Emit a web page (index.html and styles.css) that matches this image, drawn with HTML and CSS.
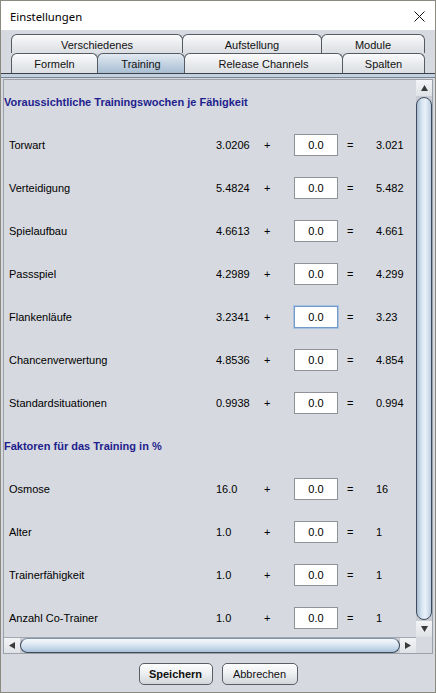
FILE: index.html
```html
<!DOCTYPE html>
<html lang="de">
<head>
<meta charset="utf-8">
<title>Einstellungen</title>
<link rel="stylesheet" href="styles.css">
</head>
<body>
<div class="window">
  <div class="titlebar">
    <span class="title">Einstellungen</span>
    <svg class="close" width="11" height="11" viewBox="0 0 11 11"><path d="M0.5 0.5L10.5 10.5M10.5 0.5L0.5 10.5" stroke="#111" stroke-width="1" fill="none"/></svg>
  </div>
  <div class="tabs">
    <div class="tabrow back">
      <div class="tab w-versch">Verschiedenes</div>
      <div class="tab w-aufst">Aufstellung</div>
      <div class="tab w-module">Module</div>
    </div>
    <div class="tabrow front">
      <div class="tab w-formeln">Formeln</div>
      <div class="tab w-training selected">Training</div>
      <div class="tab w-release">Release Channels</div>
      <div class="tab w-spalten">Spalten</div>
    </div>
  </div>
  <div class="tabline"></div>
  <div class="pane">
    <div class="pane-main">
      <div class="viewport">
        <div class="heading">Voraussichtliche Trainingswochen je Fähigkeit</div>
        <div class="row"><span class="label">Torwart</span><span>3.0206</span><span>+</span><span class="field">0.0</span><span class="eq">=</span><span>3.021</span></div>
        <div class="row"><span class="label">Verteidigung</span><span>5.4824</span><span>+</span><span class="field">0.0</span><span class="eq">=</span><span>5.482</span></div>
        <div class="row"><span class="label">Spielaufbau</span><span>4.6613</span><span>+</span><span class="field">0.0</span><span class="eq">=</span><span>4.661</span></div>
        <div class="row"><span class="label">Passspiel</span><span>4.2989</span><span>+</span><span class="field">0.0</span><span class="eq">=</span><span>4.299</span></div>
        <div class="row"><span class="label">Flankenläufe</span><span>3.2341</span><span>+</span><span class="field focused">0.0</span><span class="eq">=</span><span>3.23</span></div>
        <div class="row"><span class="label">Chancenverwertung</span><span>4.8536</span><span>+</span><span class="field">0.0</span><span class="eq">=</span><span>4.854</span></div>
        <div class="row"><span class="label">Standardsituationen</span><span>0.9938</span><span>+</span><span class="field">0.0</span><span class="eq">=</span><span>0.994</span></div>
        <div class="heading">Faktoren für das Training in %</div>
        <div class="row"><span class="label">Osmose</span><span>16.0</span><span>+</span><span class="field">0.0</span><span class="eq">=</span><span>16</span></div>
        <div class="row"><span class="label">Alter</span><span>1.0</span><span>+</span><span class="field">0.0</span><span class="eq">=</span><span>1</span></div>
        <div class="row"><span class="label">Trainerfähigkeit</span><span>1.0</span><span>+</span><span class="field">0.0</span><span class="eq">=</span><span>1</span></div>
        <div class="row"><span class="label">Anzahl Co-Trainer</span><span>1.0</span><span>+</span><span class="field">0.0</span><span class="eq">=</span><span>1</span></div>
      </div>
      <div class="vscroll">
        <div class="sbtn"><svg width="7" height="6" viewBox="0 0 7 6"><polygon points="3.5,0 7,6 0,6" fill="#3a3a3a"/></svg></div>
        <div class="vtrack"><div class="vthumb"></div></div>
        <div class="sbtn"><svg width="7" height="6" viewBox="0 0 7 6"><polygon points="0,0 7,0 3.5,6" fill="#3a3a3a"/></svg></div>
      </div>
    </div>
    <div class="hscroll-row">
      <div class="hscroll">
        <div class="sbtn"><svg width="6" height="7" viewBox="0 0 6 7"><polygon points="0,3.5 6,0 6,7" fill="#3a3a3a"/></svg></div>
        <div class="htrack"><div class="hthumb"></div></div>
        <div class="sbtn"><svg width="6" height="7" viewBox="0 0 6 7"><polygon points="0,0 6,3.5 0,7" fill="#3a3a3a"/></svg></div>
      </div>
      <div class="corner"></div>
    </div>
  </div>
  <div class="buttons">
    <div class="btn default w-save">Speichern</div>
    <div class="btn w-cancel">Abbrechen</div>
  </div>
</div>
</body>
</html>
```

FILE: styles.css
```css
html, body {
  margin: 0;
  padding: 0;
}
body {
  width: 436px;
  height: 693px;
  background: #d6d9df;
  font-family: "Liberation Sans", Arial, sans-serif;
  font-size: 11px;
  color: #000;
}
.window {
  width: 436px;
  height: 693px;
  box-sizing: border-box;
  border: 1px solid #8a8a80;
  background: #d6d9df;
  display: flex;
  flex-direction: column;
}
.titlebar {
  height: 29px;
  flex: none;
  background: #fff;
  display: flex;
  align-items: center;
  justify-content: space-between;
  padding: 0 10px 0 9px;
}
.title {
  font-family: "Noto Sans", "Open Sans", sans-serif;
  font-size: 11.3px;
  color: #000;
  margin-top: 1px;
}
.close {
  display: block;
  margin-top: 1px;
}
.tabs {
  margin-top: 4px;
  padding-left: 10px;
  flex: none;
}
.tabrow {
  display: flex;
}
.tab {
  box-sizing: border-box;
  border: 1px solid #555b63;
  border-bottom: none;
  border-radius: 6px 6px 0 0;
  display: flex;
  align-items: center;
  justify-content: center;
  background: linear-gradient(#fbfbfc, #e6e8eb 60%, #dcdfe3);
  color: #111;
}
.tab + .tab {
  margin-left: -1px;
}
.back .tab {
  height: 19px;
  padding-top: 1px;
}
.front .tab {
  height: 20px;
  padding-top: 1px;
}
.tab.selected {
  background: linear-gradient(#e3eaf2, #c4d3e2 50%, #a9bed3);
}
.w-versch { width: 172px; }
.w-aufst { width: 140px; }
.w-module { width: 104px; }
.w-formeln { width: 87px; }
.w-training { width: 88px; }
.w-release { width: 159px; }
.w-spalten { width: 83px; }
.tabline {
  flex: none;
  height: 3px;
  border-top: 1px solid #3a414b;
  border-bottom: 1px solid #7c848f;
  background: #c3d1e0;
}
.pane {
  flex: none;
  height: 575px;
  box-sizing: border-box;
  margin: 1px 2px 0 2px;
  border: 1px solid #9ca1a9;
  display: flex;
  flex-direction: column;
}
.pane-main {
  display: flex;
  height: 557px;
}
.viewport {
  width: 412px;
  height: 557px;
  overflow: hidden;
}
.heading {
  height: 43px;
  display: flex;
  align-items: center;
  font-weight: bold;
  color: #1e1e8e;
}
.row {
  height: 43px;
  display: grid;
  grid-template-columns: 212px 48px 30px 44px 38px 1fr;
  align-items: center;
}
.label {
  padding-left: 5px;
}
.eq {
  padding-left: 9px;
}
.field {
  height: 22px;
  box-sizing: border-box;
  border: 1px solid #8f9297;
  background: #fff;
  text-align: center;
  line-height: 20px;
}
.field.focused {
  border-color: #7399c8;
  box-shadow: 0 0 0 1px #a9c2e0;
}
.vscroll {
  width: 16px;
  display: flex;
  flex-direction: column;
  background: #c9ccd2;
}
.sbtn {
  width: 16px;
  height: 16px;
  flex: none;
  display: flex;
  align-items: center;
  justify-content: center;
  background: linear-gradient(#f3f4f6, #dfe2e6);
}
.vscroll .sbtn svg, .hscroll .sbtn svg {
  display: block;
}
.vtrack {
  flex: 1;
  padding: 1px 0 1px 0;
  display: flex;
}
.vthumb {
  flex: 1;
  box-sizing: border-box;
  border: 1px solid #3e4b5c;
  border-radius: 8px;
  background: linear-gradient(to right, #a9bdd2, #d9e6f2 35%, #eaf1f8 60%, #b9cde1);
}
.hscroll-row {
  display: flex;
  height: 16px;
}
.hscroll {
  width: 412px;
  display: flex;
  background: #c9ccd2;
  box-sizing: border-box;
  border-top: 1px solid #a3a8b0;
}
.hscroll .sbtn {
  height: 15px;
}
.htrack {
  flex: 1;
  display: flex;
}
.hthumb {
  flex: 1;
  box-sizing: border-box;
  border: 1px solid #3e4b5c;
  border-top-color: #8092a8;
  border-radius: 8px;
  background: linear-gradient(#f6f9fc, #dde8f3 40%, #c2d5e8 75%, #a8c0d8);
}
.corner {
  width: 16px;
  background: #d6d9df;
}
.buttons {
  flex: 1;
  display: flex;
  justify-content: center;
  align-items: flex-start;
  gap: 9px;
  padding-top: 9px;
}
.btn {
  height: 22px;
  box-sizing: border-box;
  border: 1px solid #5a5f67;
  border-radius: 5px;
  background: linear-gradient(#fdfdfd, #eceef0 50%, #d3d6db);
  display: flex;
  align-items: center;
  justify-content: center;
  color: #111;
}
.btn.default {
  font-weight: bold;
}
.w-save { width: 74px; }
.w-cancel { width: 76px; }
```
